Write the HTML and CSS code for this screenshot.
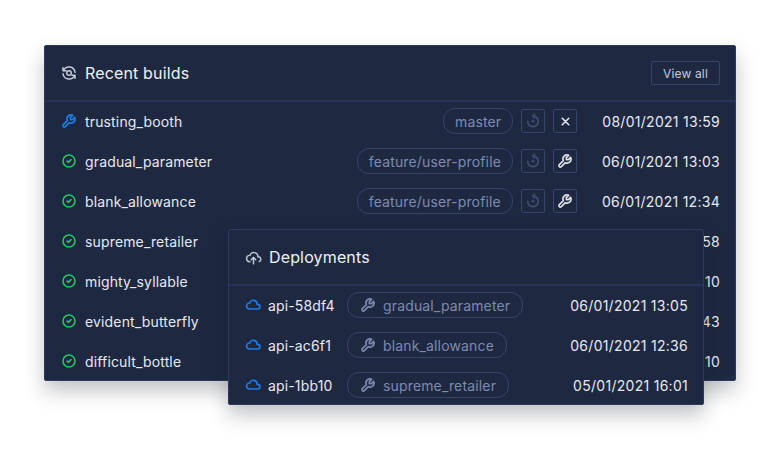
FILE: index.html
```html
<!DOCTYPE html>
<html lang="en">
<head>
    <meta charset="UTF-8">
    <meta name="viewport" content="width=device-width, initial-scale=1.0">
    <title>Recent builds</title>
    <link rel="stylesheet" href="styles.css">
</head>
<body>
    <svg class="sprites" width="0" height="0">
        <symbol id="wrench" viewBox="0 0 24 24"><path d="M17 10h-3v-3l3.500-3.500a6 6 0 0 0-8 8l-6 6a2 2 0 0 0 3 3l6-6a6 6 0 0 0 8-8l-3.500 3.500"/></symbol>
        <symbol id="check" viewBox="0 0 24 24"><circle cx="12" cy="12" r="9"/><path d="M9 12l2 2l4-4"/></symbol>
        <symbol id="retry" viewBox="0 0 24 24"><path d="M12 4.500a8 8 0 1 1-8 8"/><path d="M14.500 2l-3 2.500 3 2.500"/><circle cx="12" cy="12.500" r="2" class="fill"/></symbol>
        <symbol id="cloud" viewBox="0 0 24 24"><path d="M7 18a4.600 4.400 0 0 1 0-9a5 4.500 0 0 1 11 2h1a3.500 3.500 0 0 1 0 7h-12"/></symbol>
    </svg>

    <main class="stage">
        <section class="card builds">
            <header class="card-head">
                <h2 class="card-title">
                    <svg class="icon head-icon" viewBox="0 0 24 24"><path d="M20 11a8.100 8.100 0 0 0-15.500-2m-.5-4v4h4"/><path d="M4 13a8.100 8.100 0 0 0 15.500 2m.5 4v-4h-4"/><circle cx="12" cy="12" r="3"/></svg>
                    Recent builds
                </h2>
                <button class="btn-view">View all</button>
            </header>
            <ul class="rows">
                <li class="row">
                    <svg class="icon status-run"><use href="#wrench"/></svg>
                    <span class="name">trusting_booth</span>
                    <span class="pill">master</span>
                    <span class="square faded"><svg class="icon"><use href="#retry"/></svg></span>
                    <span class="square"><svg class="icon cross" viewBox="0 0 24 24"><path d="M6 6l12 12M18 6L6 18"/></svg></span>
                    <span class="date">08/01/2021 13:59</span>
                </li>
                <li class="row">
                    <svg class="icon status-ok"><use href="#check"/></svg>
                    <span class="name">gradual_parameter</span>
                    <span class="pill">feature/user-profile</span>
                    <span class="square faded"><svg class="icon"><use href="#retry"/></svg></span>
                    <span class="square"><svg class="icon"><use href="#wrench"/></svg></span>
                    <span class="date">06/01/2021 13:03</span>
                </li>
                <li class="row">
                    <svg class="icon status-ok"><use href="#check"/></svg>
                    <span class="name">blank_allowance</span>
                    <span class="pill">feature/user-profile</span>
                    <span class="square faded"><svg class="icon"><use href="#retry"/></svg></span>
                    <span class="square"><svg class="icon"><use href="#wrench"/></svg></span>
                    <span class="date">06/01/2021 12:34</span>
                </li>
                <li class="row">
                    <svg class="icon status-ok"><use href="#check"/></svg>
                    <span class="name">supreme_retailer</span>
                    <span class="date">05/01/2021 15:58</span>
                </li>
                <li class="row">
                    <svg class="icon status-ok"><use href="#check"/></svg>
                    <span class="name">mighty_syllable</span>
                    <span class="date">05/01/2021 14:10</span>
                </li>
                <li class="row">
                    <svg class="icon status-ok"><use href="#check"/></svg>
                    <span class="name">evident_butterfly</span>
                    <span class="date">04/01/2021 17:43</span>
                </li>
                <li class="row">
                    <svg class="icon status-ok"><use href="#check"/></svg>
                    <span class="name">difficult_bottle</span>
                    <span class="date">04/01/2021 11:10</span>
                </li>
            </ul>
        </section>

        <section class="card deployments">
            <header class="card-head">
                <h2 class="card-title">
                    <svg class="icon head-icon" viewBox="0 0 24 24"><path d="M7 18a4.600 4.400 0 0 1 0-9a5 4.500 0 0 1 11 2h1a3.500 3.500 0 0 1 1 6.800"/><path d="M9 15l3-3l3 3"/><path d="M12 12v9"/></svg>
                    Deployments
                </h2>
            </header>
            <ul class="rows">
                <li class="row">
                    <svg class="icon status-run"><use href="#cloud"/></svg>
                    <span class="name">api-58df4</span>
                    <span class="pill pill-ref"><svg class="icon"><use href="#wrench"/></svg>gradual_parameter</span>
                    <span class="date">06/01/2021 13:05</span>
                </li>
                <li class="row">
                    <svg class="icon status-run"><use href="#cloud"/></svg>
                    <span class="name">api-ac6f1</span>
                    <span class="pill pill-ref"><svg class="icon"><use href="#wrench"/></svg>blank_allowance</span>
                    <span class="date">06/01/2021 12:36</span>
                </li>
                <li class="row">
                    <svg class="icon status-run"><use href="#cloud"/></svg>
                    <span class="name">api-1bb10</span>
                    <span class="pill pill-ref"><svg class="icon"><use href="#wrench"/></svg>supreme_retailer</span>
                    <span class="date">05/01/2021 16:01</span>
                </li>
            </ul>
        </section>
    </main>
</body>
</html>
```

FILE: styles.css
```css
html, body { margin: 0; height: 100%; background: #fff; overflow: hidden; }
body { font-family: Inter, "Liberation Sans", sans-serif; font-size: 14px; letter-spacing: 0.15px; color: #e6e9f2; }
.sprites { position: absolute; }
.stage { position: relative; width: 780px; height: 450px; padding: 45px 44px; box-sizing: border-box; }

.card { box-sizing: border-box; background: #1e2840; border: 1px solid #2c3a5e; border-radius: 2px; box-shadow: 0 10px 20px rgba(20, 26, 40, 0.26); }
.builds { height: 336px; overflow: hidden; }
.deployments { position: absolute; left: 228px; top: 229px; width: 476px; height: 176px; }

.card-head { display: flex; align-items: center; justify-content: space-between; height: 54px; padding: 0 15px 0 15px; border-bottom: 2px solid #28345a; }
.card-title { display: flex; align-items: center; gap: 7px; margin: 0; font-size: 16px; font-weight: 400; color: #eef0f6; }
.btn-view { height: 24px; width: 69px; padding: 0; background: transparent; border: 1px solid #36456e; border-radius: 2px; color: #c3cad9; font: 12px Inter, sans-serif; letter-spacing: 0.15px; }

.icon { width: 16px; height: 16px; fill: none; stroke: currentColor; stroke-width: 2.4; stroke-linecap: round; stroke-linejoin: round; flex: none; }
.icon.head-icon { width: 18px; height: 18px; stroke-width: 2; color: #c3cad9; }
.status-run { color: #1a7fe8; }
.status-ok { color: #22c55e; }
.fill { fill: currentColor; stroke: none; }

.rows { list-style: none; margin: -1px 0 0; padding: 0; }
.row { display: flex; align-items: center; height: 40px; padding: 0 15px 0 16px; }
.name { margin-left: 8px; color: #e6e9f2; }
.date { margin-left: auto; letter-spacing: 0.28px; color: #e6e9f2; }

.pill { margin-left: auto; display: flex; align-items: center; height: 24px; padding: 0 11px; border: 1px solid #36456e; border-radius: 12px; color: #7d8bb0; }
.square { display: flex; align-items: center; justify-content: center; width: 24px; height: 24px; margin-left: 8px; border: 1px solid #36456e; border-radius: 2px; color: #dfe3ec; box-sizing: border-box; }
.square .cross { width: 13px; height: 13px; stroke-width: 3; }
.square + .date { margin-left: 25px; }
.faded { color: #3f4e74; }

.deployments .card-head { padding-left: 16px; }
.deployments .icon.head-icon { width: 17px; height: 17px; }
.deployments .name { margin-left: 7px; min-width: 67px; }
.pill-ref { margin-left: 12px; gap: 7px; padding: 0 12px; }
.pill-ref .icon { color: #7d8bb0; }
```
